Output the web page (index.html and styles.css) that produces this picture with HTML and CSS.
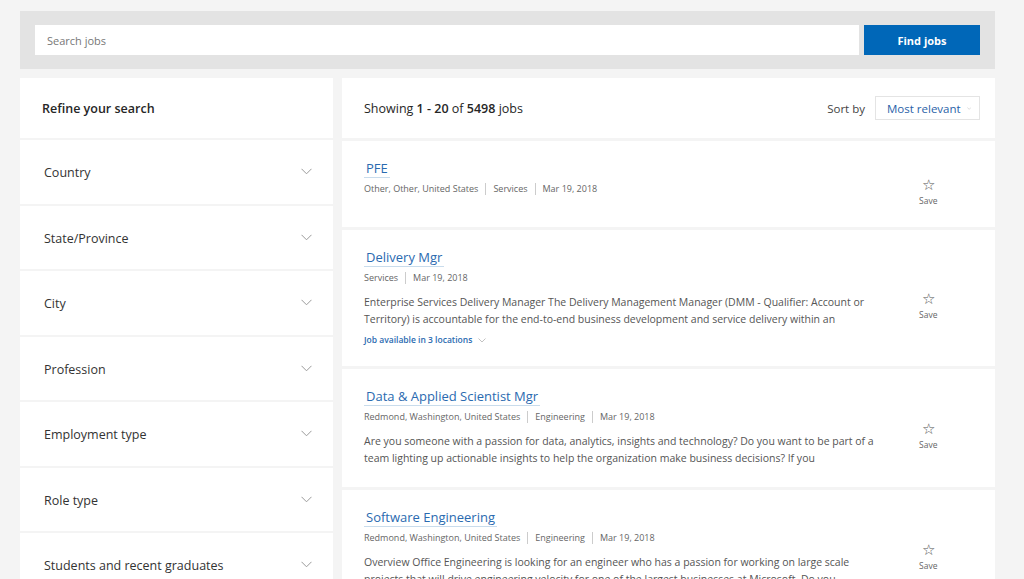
FILE: index.html
```html
<!DOCTYPE html>
<html>
<head>
    <title>Search jobs</title>
    <link rel="stylesheet" href="styles.css">
</head>
<body>
    <div class="page">
        <div class="search-bar">
            <input type="text" class="search-input" placeholder="Search jobs">
            <button class="find-btn">Find jobs</button>
        </div>

        <div class="content">
            <div class="filters">
                <div class="panel-head"><strong>Refine your search</strong></div>
                <div class="filter-row"><span>Country</span><svg class="chev" width="11" height="7" viewBox="0 0 11 7"><polyline points="0.5,0.8 5.5,5.8 10.5,0.8" fill="none" stroke="#9a9a9a" stroke-width="1"/></svg></div>
                <div class="filter-row"><span>State/Province</span><svg class="chev" width="11" height="7" viewBox="0 0 11 7"><polyline points="0.5,0.8 5.5,5.8 10.5,0.8" fill="none" stroke="#9a9a9a" stroke-width="1"/></svg></div>
                <div class="filter-row"><span>City</span><svg class="chev" width="11" height="7" viewBox="0 0 11 7"><polyline points="0.5,0.8 5.5,5.8 10.5,0.8" fill="none" stroke="#9a9a9a" stroke-width="1"/></svg></div>
                <div class="filter-row"><span>Profession</span><svg class="chev" width="11" height="7" viewBox="0 0 11 7"><polyline points="0.5,0.8 5.5,5.8 10.5,0.8" fill="none" stroke="#9a9a9a" stroke-width="1"/></svg></div>
                <div class="filter-row"><span>Employment type</span><svg class="chev" width="11" height="7" viewBox="0 0 11 7"><polyline points="0.5,0.8 5.5,5.8 10.5,0.8" fill="none" stroke="#9a9a9a" stroke-width="1"/></svg></div>
                <div class="filter-row"><span>Role type</span><svg class="chev" width="11" height="7" viewBox="0 0 11 7"><polyline points="0.5,0.8 5.5,5.8 10.5,0.8" fill="none" stroke="#9a9a9a" stroke-width="1"/></svg></div>
                <div class="filter-row"><span>Students and recent graduates</span><svg class="chev" width="11" height="7" viewBox="0 0 11 7"><polyline points="0.5,0.8 5.5,5.8 10.5,0.8" fill="none" stroke="#9a9a9a" stroke-width="1"/></svg></div>
            </div>

            <div class="results">
                <div class="panel-head results-head">
                    <div>Showing <b>1 - 20</b> of <b>5498</b> jobs</div>
                    <div class="sort">
                        <span class="sort-label">Sort by</span>
                        <div class="sort-select">Most relevant <svg class="chev-sm" width="8" height="5" viewBox="0 0 8 5"><polyline points="0.5,0.5 4,4 7.5,0.5" fill="none" stroke="#c2c2c2" stroke-width="1"/></svg></div>
                    </div>
                </div>

                <div class="job job-short">
                    <div class="job-main">
                        <a class="job-title" href="#">PFE</a>
                        <div class="job-meta"><span>Other, Other, United States</span><span>Services</span><span>Mar 19, 2018</span></div>
                    </div>
                    <div class="save"><span class="star">&#9734;</span><span>Save</span></div>
                </div>

                <div class="job">
                    <div class="job-main">
                        <a class="job-title" href="#">Delivery Mgr</a>
                        <div class="job-meta"><span>Services</span><span>Mar 19, 2018</span></div>
                        <p class="job-desc">Enterprise Services Delivery Manager The Delivery Management Manager (DMM - Qualifier: Account or Territory) is accountable for the end-to-end business development and service delivery within an</p>
                        <a class="locations" href="#">Job available in 3 locations <svg class="chev-sm" width="8" height="5" viewBox="0 0 8 5"><polyline points="0.5,0.5 4,4 7.5,0.5" fill="none" stroke="#c2c2c2" stroke-width="1"/></svg></a>
                    </div>
                    <div class="save"><span class="star">&#9734;</span><span>Save</span></div>
                </div>

                <div class="job">
                    <div class="job-main">
                        <a class="job-title" href="#">Data &amp; Applied Scientist Mgr</a>
                        <div class="job-meta"><span>Redmond, Washington, United States</span><span>Engineering</span><span>Mar 19, 2018</span></div>
                        <p class="job-desc">Are you someone with a passion for data, analytics, insights and technology? Do you want to be part of a team lighting up actionable insights to help the organization make business decisions? If you</p>
                    </div>
                    <div class="save"><span class="star">&#9734;</span><span>Save</span></div>
                </div>

                <div class="job">
                    <div class="job-main">
                        <a class="job-title" href="#">Software Engineering</a>
                        <div class="job-meta"><span>Redmond, Washington, United States</span><span>Engineering</span><span>Mar 19, 2018</span></div>
                        <p class="job-desc">Overview Office Engineering is looking for an engineer who has a passion for working on large scale projects that will drive engineering velocity for one of the largest businesses at Microsoft. Do you</p>
                    </div>
                    <div class="save"><span class="star">&#9734;</span><span>Save</span></div>
                </div>
            </div>
        </div>
    </div>
</body>
</html>
```

FILE: styles.css
```css
body {
    margin: 0;
    background-color: #f4f4f4;
    font-family: 'Open Sans', 'Noto Sans', sans-serif;
    color: #262626;
    overflow: hidden;
}

.page {
    width: 975px;
    margin-left: 20px;
    padding-top: 11px;
}

.search-bar {
    display: flex;
    gap: 5px;
    background-color: #e3e3e3;
    padding: 14px 15px 14px 15px;
}

.search-input {
    flex: 1;
    height: 30px;
    border: none;
    padding: 0 12px;
    font-family: inherit;
    font-size: 11px;
    color: #333;
    outline: none;
    box-sizing: border-box;
}

.search-input::placeholder {
    color: #777;
}

.find-btn {
    width: 116px;
    height: 30px;
    border: none;
    background-color: #0067b8;
    color: white;
    font-family: inherit;
    font-size: 11px;
    font-weight: bold;
    cursor: pointer;
}

.content {
    display: flex;
    gap: 9px;
    margin-top: 9px;
}

.filters {
    width: 313px;
    display: flex;
    flex-direction: column;
    gap: 2px;
}

.results {
    flex: 1;
    display: flex;
    flex-direction: column;
    gap: 3px;
}

.panel-head {
    background-color: white;
    height: 60px;
    display: flex;
    align-items: center;
    padding: 0 22px;
    font-size: 12.5px;
    box-sizing: border-box;
}

.panel-head strong {
    font-weight: 600;
}

.filter-row {
    background-color: white;
    height: 63.5px;
    display: flex;
    align-items: center;
    justify-content: space-between;
    padding: 2px 21px 0 24px;
    font-size: 12.5px;
    color: #333;
    box-sizing: border-box;
}

.chev {
    margin-top: -2px;
}

.chev-sm {
    margin-left: 6px;
    vertical-align: middle;
}

.results-head {
    justify-content: space-between;
    padding: 0 15px 0 22px;
    font-size: 12.5px;
}

.results-head b {
    font-weight: 600;
}

.sort {
    display: flex;
    align-items: center;
    gap: 10px;
}

.sort-label {
    font-size: 11.5px;
    color: #444;
}

.sort-select {
    border: 1px solid #e4e4e4;
    height: 24px;
    padding: 0 8px 0 11px;
    display: flex;
    align-items: center;
    font-size: 11.5px;
    color: #2a62a8;
    white-space: nowrap;
    box-sizing: border-box;
    width: 105px;
}

.job {
    background-color: white;
    display: flex;
    align-items: center;
    padding: 19px 0 20px 22px;
}

.job-short {
    min-height: 47px;
}

.job-short .job-main {
    align-self: flex-start;
}

.job-main {
    width: 510px;
}

.job-title {
    display: block;
    width: fit-content;
    color: #2a6ab0;
    font-size: 13px;
    text-decoration: none;
    border-bottom: 1px solid #c9dcec;
    padding: 0 2px 1px 2px;
    line-height: 16px;
}

.job-meta {
    margin-top: 5px;
    font-size: 9px;
    color: #666;
    display: flex;
}

.job-meta span {
    padding: 0 7px;
    border-left: 1px solid #ccc;
    line-height: 12px;
}

.job-meta span:first-child {
    padding-left: 0;
    border-left: none;
}

.job-desc {
    margin: 10px 0 0 0;
    font-size: 10.5px;
    line-height: 17px;
    color: #555;
}

.locations {
    display: flex;
    align-items: center;
    width: fit-content;
    margin-top: 6px;
    font-size: 8.5px;
    line-height: 12px;
    color: #2a6ab0;
    text-decoration: none;
    font-weight: 600;
}

.save {
    margin-left: 45px;
    margin-top: 16px;
    display: flex;
    flex-direction: column;
    align-items: center;
    gap: 3px;
    font-size: 8.5px;
    color: #666;
}

.star {
    font-size: 15px;
    line-height: 15px;
    color: #555;
}
```
